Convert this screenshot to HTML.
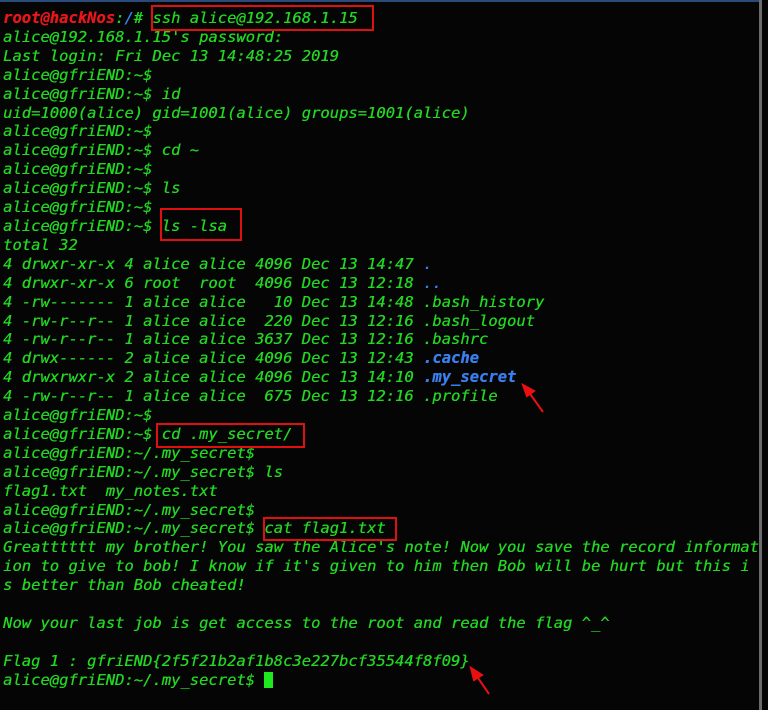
<!DOCTYPE html>
<html><head><meta charset="utf-8"><style>
html,body{margin:0;padding:0;background:#050505;width:768px;height:710px;overflow:hidden;position:relative}
pre{margin:0;position:absolute;left:3px;top:9px;font-family:"DejaVu Sans Mono","Liberation Mono",monospace;font-style:italic;font-size:15.5px;line-height:18.9px;color:#22d622;white-space:pre;text-shadow:0.3px 0 0 currentColor}
.r{color:#e8161b;font-weight:bold}.b{color:#3a7ff0}.bb{color:#3a7ff0;font-weight:bold}
.box{position:absolute;border:2px solid #e01010;box-sizing:border-box}
.cur{display:inline-block;width:9px;height:16px;background:#1ee81e;vertical-align:-3px}
.sb{position:absolute;left:759px;top:0;width:3px;height:710px;background:#6a6a6a}
.top{position:absolute;left:0;top:0;width:759px;height:2px;background:#2a4a7a}
</style></head><body>
<div class="top"></div>
<pre><span class="r">root@hackNos</span>:<span class="b">/</span># ssh alice@192.168.1.15
alice@192.168.1.15's password:
Last login: Fri Dec 13 14:48:25 2019
alice@gfriEND:~$
alice@gfriEND:~$ id
uid=1000(alice) gid=1001(alice) groups=1001(alice)
alice@gfriEND:~$
alice@gfriEND:~$ cd ~
alice@gfriEND:~$
alice@gfriEND:~$ ls
alice@gfriEND:~$
alice@gfriEND:~$ ls -lsa
total 32
4 drwxr-xr-x 4 alice alice 4096 Dec 13 14:47 <span class="b">.</span>
4 drwxr-xr-x 6 root  root  4096 Dec 13 12:18 <span class="b">..</span>
4 -rw------- 1 alice alice   10 Dec 13 14:48 .bash_history
4 -rw-r--r-- 1 alice alice  220 Dec 13 12:16 .bash_logout
4 -rw-r--r-- 1 alice alice 3637 Dec 13 12:16 .bashrc
4 drwx------ 2 alice alice 4096 Dec 13 12:43 <span class="bb">.cache</span>
4 drwxrwxr-x 2 alice alice 4096 Dec 13 14:10 <span class="bb">.my_secret</span>
4 -rw-r--r-- 1 alice alice  675 Dec 13 12:16 .profile
alice@gfriEND:~$
alice@gfriEND:~$ cd .my_secret/
alice@gfriEND:~/.my_secret$
alice@gfriEND:~/.my_secret$ ls
flag1.txt  my_notes.txt
alice@gfriEND:~/.my_secret$
alice@gfriEND:~/.my_secret$ cat flag1.txt
Greatttttt my brother! You saw the Alice's note! Now you save the record informat
ion to give to bob! I know if it's given to him then Bob will be hurt but this i
s better than Bob cheated!

Now your last job is get access to the root and read the flag ^_^

Flag 1 : gfriEND{2f5f21b2af1b8c3e227bcf35544f8f09}
alice@gfriEND:~/.my_secret$ <span class="cur"></span></pre>
<div class="box" style="left:151px;top:5px;width:223px;height:26px"></div>
<div class="box" style="left:160px;top:208px;width:82px;height:33px"></div>
<div class="box" style="left:156px;top:423px;width:149px;height:25px"></div>
<div class="box" style="left:263px;top:517px;width:134px;height:24px"></div>
<div class="sb"></div>
<svg style="position:absolute;left:0;top:0" width="768" height="710">
<g stroke="#e81010" stroke-width="2" fill="#e81010">
<line x1="543" y1="412" x2="528" y2="391"/><polygon points="523,385 534,391 527,396" />
<line x1="489" y1="694" x2="476" y2="675"/><polygon points="471,668 482,675 474,680"/>
</g></svg>
</body></html>
